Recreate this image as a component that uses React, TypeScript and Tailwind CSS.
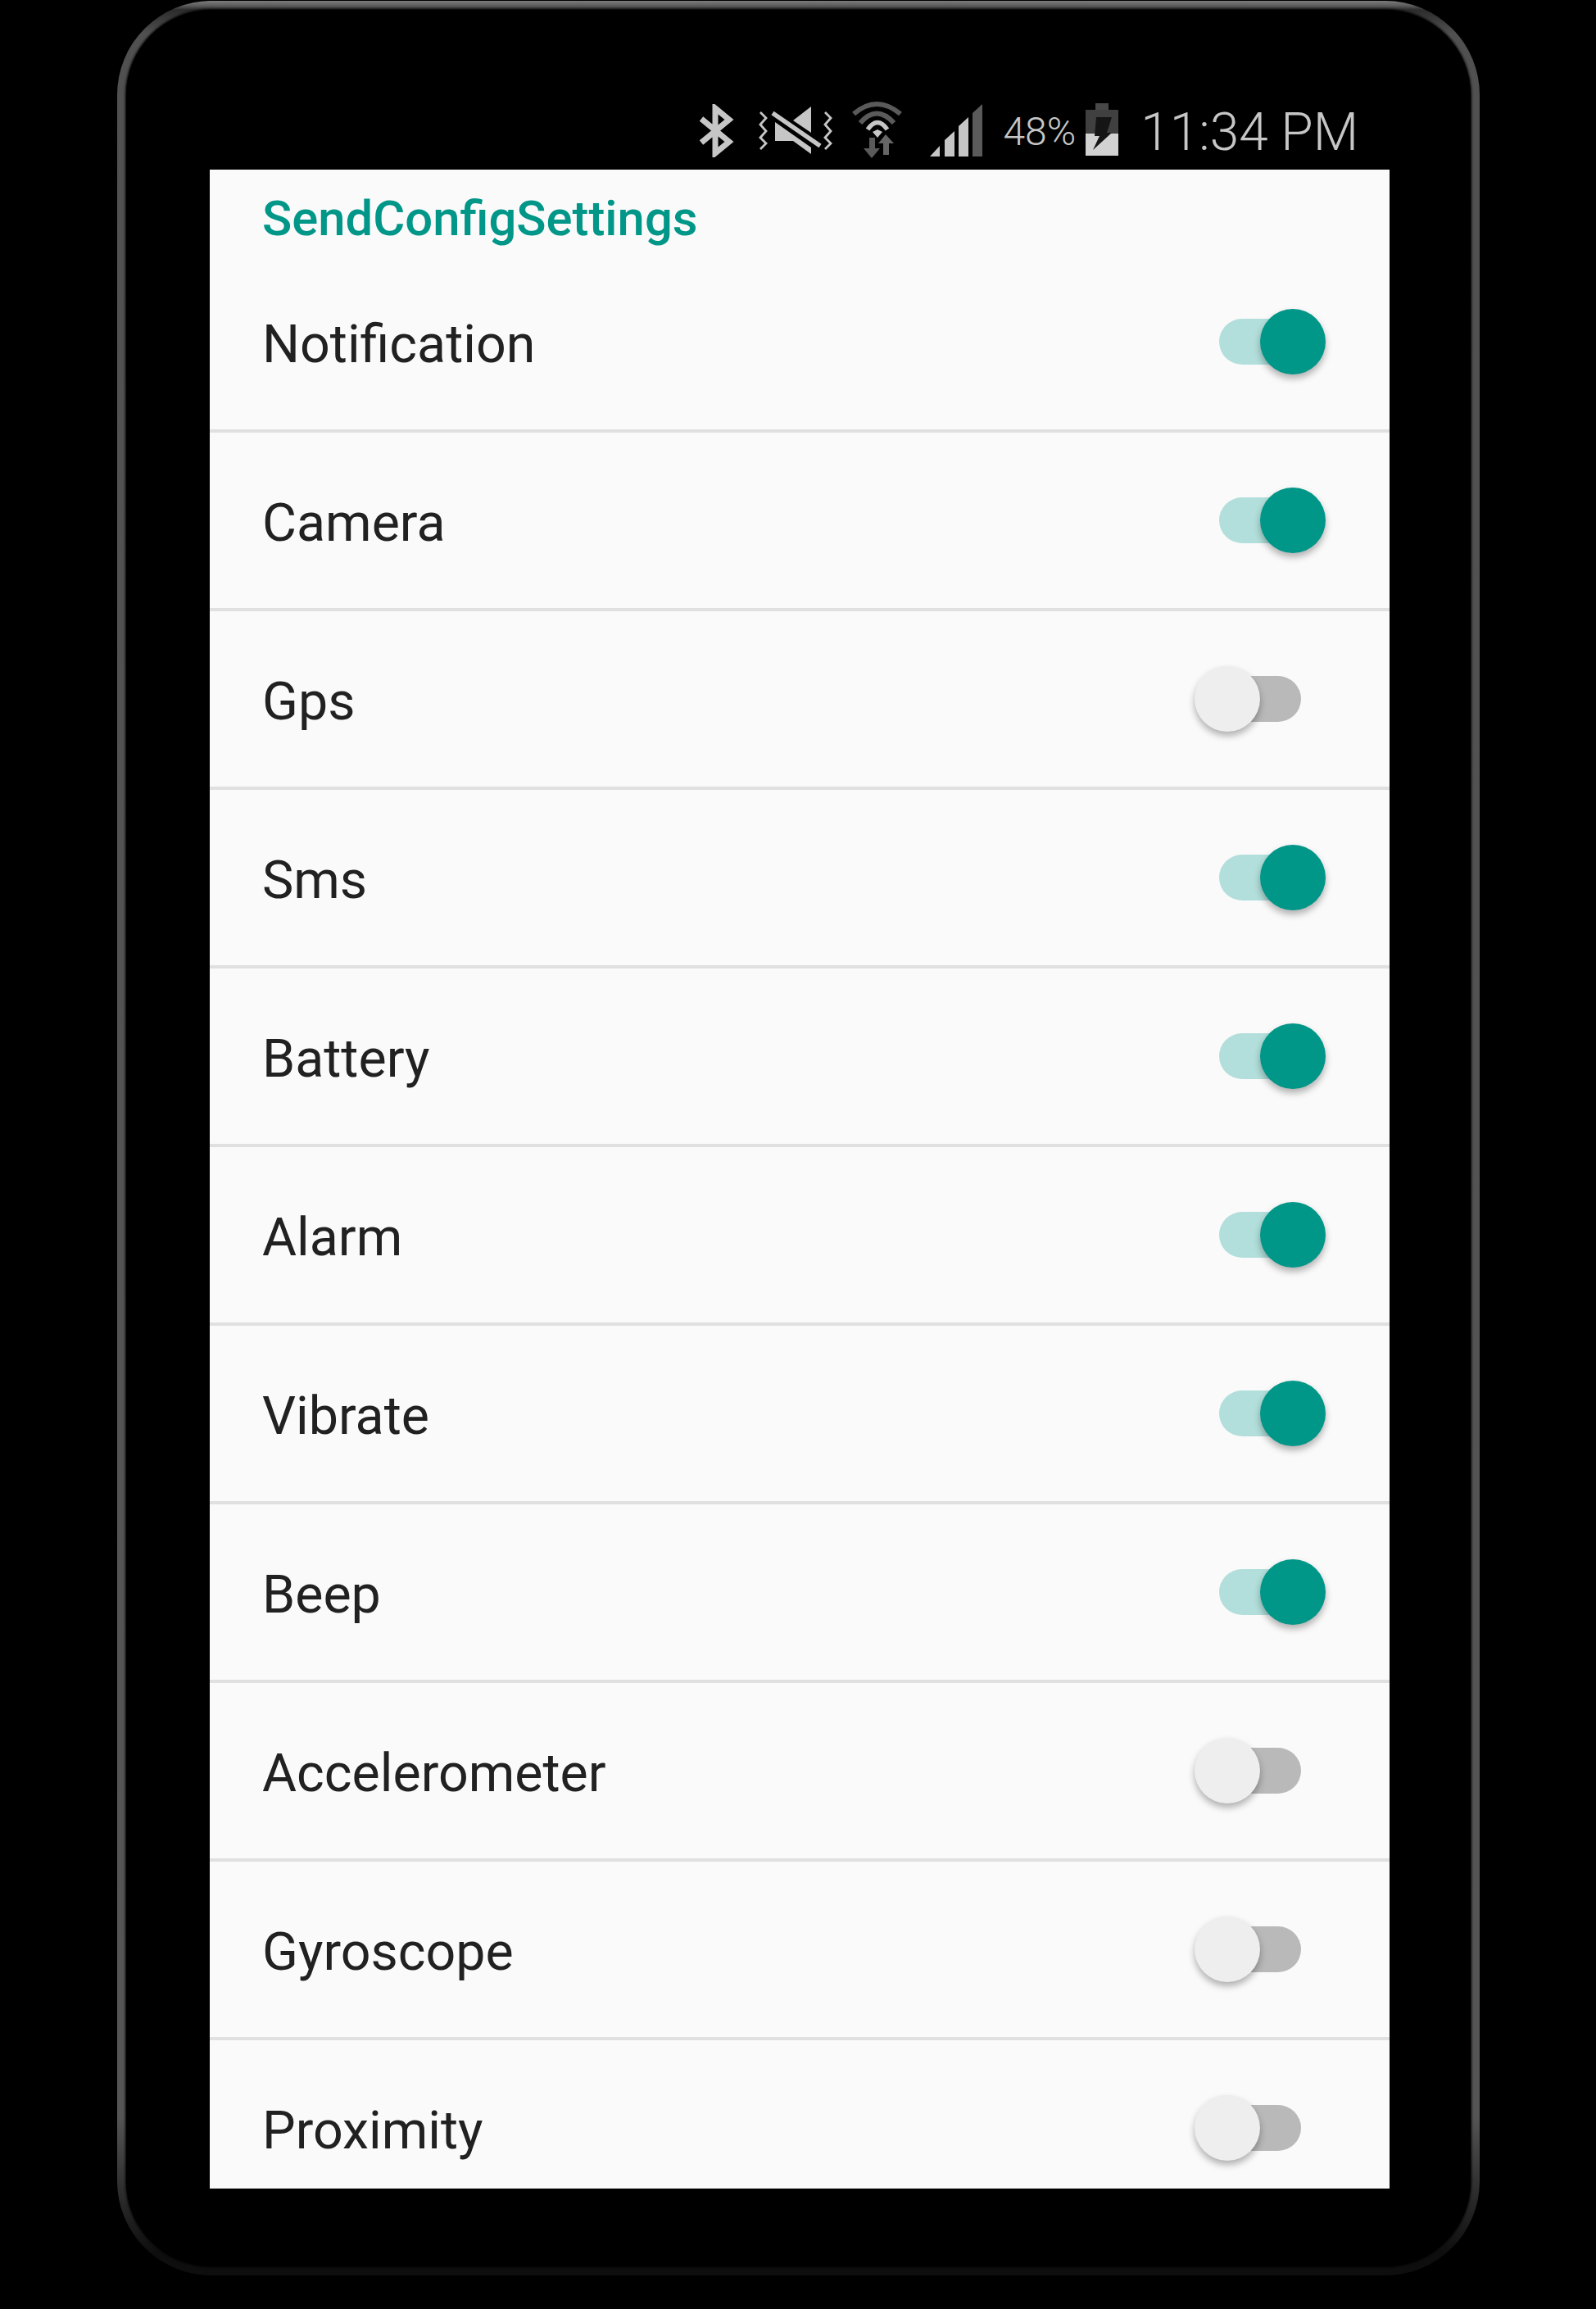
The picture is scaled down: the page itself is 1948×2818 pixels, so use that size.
const rows = [
  { label: "Notification", on: true },
  { label: "Camera", on: true },
  { label: "Gps", on: false },
  { label: "Sms", on: true },
  { label: "Battery", on: true },
  { label: "Alarm", on: true },
  { label: "Vibrate", on: true },
  { label: "Beep", on: true },
  { label: "Accelerometer", on: false },
  { label: "Gyroscope", on: false },
  { label: "Proximity", on: false },
];

const Switch = ({ on }: { on: boolean }) => (
  <div className={`flex h-14 w-[100px] items-center rounded-full ${on ? "bg-[#b2dfdb]" : "bg-[#b9b9b9]"}`}>
    {on ? (
      <div className="ml-[50px] size-20 shrink-0 rounded-full bg-[#009688] shadow-[0_5px_9px_rgba(0,0,0,0.3)]" />
    ) : (
      <div className="-ml-[30px] size-20 shrink-0 rounded-full bg-[#eeeeee] shadow-[0_5px_9px_rgba(0,0,0,0.3)]" />
    )}
  </div>
);

const StatusIcons = () => (
  <div className="flex h-[195px] items-start justify-end pr-[137px] font-[Roboto,sans-serif] font-light text-[#c6c6c6]">
    {/* bluetooth */}
    <svg className="mt-[115px]" width="43" height="65" viewBox="0 0 43 65">
      <path d="M3 18 L37 46 L20 60 V5 L37 19 L3 47" fill="none" stroke="#c6c6c6" strokeWidth="7" />
    </svg>
    {/* vibrate / mute */}
    <svg className="mt-[118px] ml-[30px]" width="90" height="58" viewBox="0 0 90 58">
      <path d="M2 7 L9 14 L2 22 L9 30 L2 38 L9 45 L2 52" fill="none" stroke="#c6c6c6" strokeWidth="2.8" />
      <path d="M81 7 L88 14 L81 22 L88 30 L81 38 L88 45 L81 52" fill="none" stroke="#c6c6c6" strokeWidth="2.8" />
      <polygon points="42,17 64,0 64,32" fill="#c6c6c6" />
      <polygon points="20,19 20,42 42,42 64,58 64,50" fill="#c6c6c6" />
      <path d="M17 8 L75 48" stroke="#c6c6c6" strokeWidth="5.5" />
    </svg>
    {/* wifi */}
    <svg className="mt-[111px] ml-[22px]" width="65" height="70" viewBox="0 0 65 70">
      <path d="M4 16 Q32 -8 61 16" fill="none" stroke="#5a5a5a" strokeWidth="6" />
      <path d="M12 27 Q32 4 53 27" fill="none" stroke="#5a5a5a" strokeWidth="6" />
      <path d="M21 35 Q33 18 45 35" fill="none" stroke="#c6c6c6" strokeWidth="5.5" />
      <polygon points="27,38 33,35 39,38 33,45" fill="#c6c6c6" />
      <polygon points="23,45 30,45 30,58 36,58 26,70 16,58 23,58" fill="#5a5a5a" />
      <polygon points="40,66 47,66 47,52 53,52 43,41 34,52 40,52" fill="#666666" />
    </svg>
    {/* signal */}
    <svg className="mt-[115px] ml-[31px]" width="65" height="64" viewBox="0 0 65 64">
      <polygon points="1,64 13,51 13,64" fill="#c6c6c6" />
      <polygon points="19,44 31,33 31,64 19,64" fill="#c6c6c6" />
      <polygon points="36,27 48,16 48,64 36,64" fill="#c6c6c6" />
      <polygon points="53,11 65,0 65,64 53,64" fill="#5a5a5a" />
    </svg>
    <span className="mt-[125px] ml-[25px] text-[48px] leading-[48px]">48%</span>
    {/* battery */}
    <svg className="mt-[114px] ml-[12px]" width="40" height="64" viewBox="0 0 40 64">
      <rect x="12" y="0" width="16" height="9" fill="#484848" />
      <rect x="0" y="8" width="40" height="30" fill="#404040" />
      <rect x="0" y="37" width="40" height="27" fill="#d2d2d2" />
      <polygon points="13,17 32,17 26,36 32,36 9,57 17,40 11,40" fill="#151515" />
    </svg>
    <span className="mt-[118px] ml-[27px] text-[64px] leading-[64px]">11:34 PM</span>
  </div>
);

export default function App() {
  return (
    <div className="h-[2818px] w-[1948px] overflow-hidden bg-black pt-px font-[Roboto,sans-serif]">
      <div className="ml-[143px] h-[2776px] w-[1663px] rounded-[115px] bg-[linear-gradient(to_bottom,#7c7c7c_0,#5c5c5c_6px,#2c2c2c_11px,#505050_40px,#555555_93%,#0e0e0e_99%)] p-[11px]">
        <div className="h-full rounded-[104px] bg-black shadow-[0_0_3px_1px_#000]">
          <StatusIcons />
          <div className="ml-[102px] h-[2464px] w-[1440px] overflow-hidden bg-[#fafafa]">
            <div className="flex h-[103px] items-center pt-[18px] pl-[64px] text-[59.8px] font-medium text-[#009688]">
              SendConfigSettings
            </div>
            {rows.map((row) => (
              <div
                key={row.label}
                className="flex h-[218px] shrink-0 items-center justify-between border-b-4 border-[#e0e0e0] pr-[108px] pl-[64px] text-[64.5px] text-[#212121]"
              >
                <span className="pt-[7px]">{row.label}</span>
                <Switch on={row.on} />
              </div>
            ))}
          </div>
        </div>
      </div>
    </div>
  );
}
